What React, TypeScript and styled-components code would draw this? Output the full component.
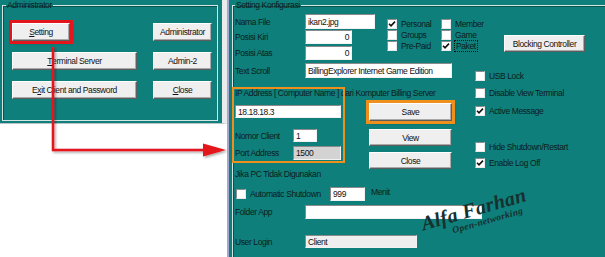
import styled, { createGlobalStyle } from "styled-components";

const TEAL = "#0f7f7c";

const Global = createGlobalStyle`
  html, body { margin: 0; padding: 0; background: #fff; }
  body {
    font-family: "Liberation Sans", Arial, sans-serif;
    font-size: 8.5px;
    letter-spacing: -0.4px;
    color: #111;
  }
`;

const Page = styled.div`
  position: relative;
  width: 605px;
  height: 257px;
  overflow: hidden;
  display: flex;
  background: #fff;
`;

const LeftCol = styled.div`
  width: 227px;
  display: flex;
  flex-direction: column;
  align-items: flex-start;
`;

const AdminWindow = styled.div`
  width: 227px;
  height: 124px;
  box-sizing: border-box;
  background: ${TEAL};
  padding: 0 0 0 2px;
  border-bottom: 1px solid #b9c4c4;
  border-right: 5px solid #e8ecec;
`;

const GroupBox = styled.fieldset<{ $w: number; $h: number; $pad: string }>`
  margin: 0;
  width: ${(p) => p.$w}px;
  height: ${(p) => p.$h}px;
  box-sizing: border-box;
  border: 1px solid #d6e4e3;
  box-shadow: inset 1px 1px 0 #0a5250;
  padding: ${(p) => p.$pad};
  min-width: 0;

  legend {
    padding: 0 1px;
    line-height: 10px;
    color: #0c1c1b;
  }
`;

const AdminGrid = styled.div`
  display: grid;
  grid-template-columns: 125px 59px;
  grid-auto-rows: 18px;
  column-gap: 16px;
  row-gap: 11px;
  margin-left: 6px;
`;

const Btn = styled.div<{ $w?: number; $h?: number }>`
  width: ${(p) => (p.$w ? `${p.$w}px` : "100%")};
  height: ${(p) => p.$h ?? 18}px;
  box-sizing: border-box;
  background: #efefef;
  border: 1px solid;
  border-color: #ffffff #5e5e5e #5e5e5e #ffffff;
  box-shadow: inset -1px -1px 0 #a9a9a9;
  display: flex;
  align-items: center;
  justify-content: center;
  color: #111;
  white-space: nowrap;

  u { text-decoration: underline; text-underline-offset: 1px; }
`;

const Highlight = styled.div<{ $color: string; $w: number }>`
  width: ${(p) => p.$w}px;
  outline: 3px solid ${(p) => p.$color};
  box-shadow: 2px 2px 3px rgba(0, 0, 0, 0.35);
`;

const RightWindow = styled.div`
  position: relative;
  flex: 1;
  background: ${TEAL};
  border-left: 2px solid #a8a6cf;
  padding-left: 3px;
  overflow: hidden;
`;

const Stack = styled.div<{ $w?: number }>`
  display: flex;
  flex-direction: column;
  align-items: flex-start;
  width: ${(p) => (p.$w ? `${p.$w}px` : "auto")};
`;

const Row = styled.div<{ $mt?: number; $h?: number }>`
  display: flex;
  align-items: center;
  margin-top: ${(p) => p.$mt ?? 0}px;
  height: ${(p) => (p.$h ? `${p.$h}px` : "auto")};
  white-space: nowrap;
`;

const Label = styled.span<{ $w?: number }>`
  display: inline-block;
  width: ${(p) => (p.$w ? `${p.$w}px` : "auto")};
  flex-shrink: 0;
  color: #0c1c1b;
`;

const Field = styled.div<{ $w: number; $h?: number; $right?: boolean; $bg?: string }>`
  width: ${(p) => p.$w}px;
  height: ${(p) => p.$h ?? 14}px;
  box-sizing: border-box;
  background: ${(p) => p.$bg ?? "#fff"};
  border: 1px solid;
  border-color: #8a8a8a #f2f2f2 #f2f2f2 #8a8a8a;
  padding: 0 2px;
  display: flex;
  align-items: center;
  justify-content: ${(p) => (p.$right ? "flex-end" : "flex-start")};
  white-space: nowrap;
  overflow: hidden;
  color: #111;
  flex-shrink: 0;
`;

const TopRow = styled.div`
  display: flex;
  align-items: flex-start;
`;

const CheckGrid = styled.div`
  display: grid;
  grid-template-columns: 54px 63px;
  grid-auto-rows: 11px;
  margin-top: 4px;
`;

const CheckItem = styled.div<{ $h?: number; $w?: number }>`
  display: flex;
  align-items: center;
  gap: 4px;
  height: ${(p) => p.$h ?? 11}px;
  width: ${(p) => (p.$w ? `${p.$w}px` : "auto")};
  white-space: nowrap;
  color: #0c1c1b;
`;

const Box = styled.span`
  width: 10px;
  height: 10px;
  box-sizing: border-box;
  background: #fff;
  border: 1px solid;
  border-color: #8d8d8d #e8e8e8 #e8e8e8 #8d8d8d;
  display: inline-flex;
  align-items: center;
  justify-content: center;
  flex-shrink: 0;
`;

const Focus = styled.span`
  outline: 1px dotted #111;
  outline-offset: 0;
  padding: 0 1px;
`;

const Middle = styled.div`
  display: flex;
  align-items: flex-start;
  margin-top: 3px;
`;

const LeftSub = styled.div`
  width: 240px;
  display: flex;
  flex-direction: column;
`;

const IpArea = styled.div`
  display: flex;
  align-items: flex-start;
  margin-top: 9px;
`;

const IpBox = styled.div`
  width: 113px;
  height: 76px;
  margin-left: -3px;
  box-sizing: border-box;
  padding: 1px 0 0 3px;
  outline: 2px solid #f0901c;
  outline-offset: -2px;
  display: flex;
  flex-direction: column;
  align-items: flex-start;
`;

const IpLabel = styled.div`
  line-height: 10px;
  white-space: nowrap;
  color: #0c1c1b;
`;

const ButtonCol = styled.div`
  display: flex;
  flex-direction: column;
  align-items: flex-start;
  margin-left: 24px;
  margin-top: 16px;
`;

const RightChecks = styled.div<{ $gaps: number[] }>`
  display: flex;
  flex-direction: column;
  padding-top: ${(p) => p.$gaps[0]}px;
  ${(p) => p.$gaps.slice(1).map((g, i) => `& > :nth-child(${i + 2}) { margin-top: ${g}px; }`).join("\n")}
`;

const Watermark = styled.div`
  position: absolute;
  left: 198px;
  top: 213px;
  transform: rotate(-16deg);
  transform-origin: left bottom;
  color: #16302f;
  pointer-events: none;
  letter-spacing: 0;
`;

const WmName = styled.div`
  font-family: "Liberation Serif", "DejaVu Serif", serif;
  font-style: italic;
  font-weight: bold;
  font-size: 20px;
  line-height: 20px;
  letter-spacing: 0.4px;
`;

const WmSub = styled.div`
  font-family: "Liberation Serif", "DejaVu Serif", serif;
  font-style: italic;
  font-weight: bold;
  font-size: 9.5px;
  line-height: 10px;
  margin-left: 28px;
  letter-spacing: 0.3px;
`;

const ArrowLayer = styled.svg`
  position: absolute;
  left: 0;
  top: 0;
  pointer-events: none;
`;

function Check({ on }: { on?: boolean }) {
  return (
    <Box>
      {on && (
        <svg width="8" height="8" viewBox="0 0 8 8">
          <path d="M1 3.8 L3 5.8 L7 1.6" stroke="#111" strokeWidth="1.6" fill="none" />
        </svg>
      )}
    </Box>
  );
}

function CheckLine({ label, on, h, w, focus }: { label: string; on?: boolean; h?: number; w?: number; focus?: boolean }) {
  return (
    <CheckItem $h={h} $w={w}>
      <Check on={on} />
      {focus ? <Focus>{label}</Focus> : <span>{label}</span>}
    </CheckItem>
  );
}

export default function App() {
  return (
    <Page>
      <Global />
      <LeftCol>
        <AdminWindow>
          <GroupBox $w={216} $h={121} $pad="13px 3px 0 3px">
            <legend>Administrator</legend>
            <AdminGrid>
              <Highlight $color="#e3161d" $w={58}>
                <Btn><u>S</u>etting</Btn>
              </Highlight>
              <Btn>Administrator</Btn>
              <Btn><u>T</u>erminal Server</Btn>
              <Btn>Admin-2</Btn>
              <Btn>E<u>x</u>it Client and Password</Btn>
              <Btn><u>C</u>lose</Btn>
            </AdminGrid>
          </GroupBox>
        </AdminWindow>
      </LeftCol>

      <RightWindow>
        <GroupBox $w={420} $h={280} $pad="4px 0 0 2px">
          <legend>Setting Konfigurasi</legend>
          <Stack>
            <TopRow>
              <Stack $w={152}>
                <Row $h={15}>
                  <Label $w={70}>Nama File</Label>
                  <Field $w={70} $h={15}>ikan2.jpg</Field>
                </Row>
                <Row $h={14} $mt={1}>
                  <Label $w={70}>Posisi Kiri</Label>
                  <Field $w={47} $right>0</Field>
                </Row>
                <Row $h={14} $mt={2}>
                  <Label $w={70}>Posisi Atas</Label>
                  <Field $w={47} $right>0</Field>
                </Row>
              </Stack>
              <CheckGrid>
                <CheckLine label="Personal" on />
                <CheckLine label="Member" />
                <CheckLine label="Groups" />
                <CheckLine label="Game" />
                <CheckLine label="Pre-Paid" />
                <CheckLine label="Paket" on focus />
              </CheckGrid>
              <Btn $w={81} $h={17} style={{ marginTop: 21 }}>Blocking Controller</Btn>
            </TopRow>

            <Middle>
              <LeftSub>
                <Row $h={15}>
                  <Label $w={70}>Text Scroll</Label>
                  <Field $w={147} $h={15}>BillingExplorer Internet Game Edition</Field>
                </Row>
                <IpArea>
                  <IpBox>
                    <IpLabel>IP Address [ Computer Name ] dari Komputer Billing Server</IpLabel>
                    <Field $w={106} $h={13} style={{ marginTop: 7 }}>18.18.18.3</Field>
                    <Row $h={13} $mt={11}>
                      <Label $w={58}>Nomor Client</Label>
                      <Field $w={24} $h={13}>1</Field>
                    </Row>
                    <Row $h={14} $mt={4}>
                      <Label $w={58}>Port Address</Label>
                      <Field $w={48} $bg="#d3d3d3">1500</Field>
                    </Row>
                  </IpBox>
                  <ButtonCol>
                    <Highlight $color="#f0901c" $w={83}>
                      <Btn>Save</Btn>
                    </Highlight>
                    <Btn $w={83} $h={17} style={{ marginTop: 8 }}>View</Btn>
                    <Btn $w={83} $h={17} style={{ marginTop: 6 }}>Close</Btn>
                  </ButtonCol>
                </IpArea>
              </LeftSub>
              <RightChecks $gaps={[7, 5, 6, 24, 4]}>
                <CheckLine label="USB Lock" h={12} />
                <CheckLine label="Disable View Terminal" h={12} />
                <CheckLine label="Active Message" on h={12} />
                <CheckLine label="Hide Shutdown/Restart" h={12} />
                <CheckLine label="Enable Log Off" on h={12} />
              </RightChecks>
            </Middle>

            <Row $h={10}>
              <Label>Jika PC Tidak Digunakan</Label>
            </Row>
            <Row $h={14} $mt={8}>
              <Label $w={94} style={{ paddingLeft: 1 }}>
                <CheckLine label="Automatic Shutdown" h={14} />
              </Label>
              <Field $w={35}>999</Field>
              <Label style={{ marginLeft: 6, marginTop: -4 }}>Menit</Label>
            </Row>
            <Row $h={14} $mt={4}>
              <Label $w={70}>Folder App</Label>
              <Field $w={177}></Field>
            </Row>
            <Row $h={13} $mt={16}>
              <Label $w={70}>User Login</Label>
              <Field $w={112} $h={13} $bg="#efefef">Client</Field>
            </Row>
          </Stack>
        </GroupBox>
        <Watermark>
          <WmName>Alfa Farhan</WmName>
          <WmSub>Open-networking</WmSub>
        </Watermark>
      </RightWindow>

      <ArrowLayer width="240" height="170" viewBox="0 0 240 170">
        <defs>
          <filter id="sh" x="-10%" y="-10%" width="130%" height="130%">
            <feDropShadow dx="1.5" dy="1.5" stdDeviation="1" floodColor="#000" floodOpacity="0.35" />
          </filter>
        </defs>
        <g filter="url(#sh)">
          <path d="M53 47 V150 H208" stroke="#e3161d" strokeWidth="2.5" fill="none" />
          <polygon points="203,143.5 226,150 203,156.5" fill="#e3161d" />
        </g>
      </ArrowLayer>
    </Page>
  );
}
